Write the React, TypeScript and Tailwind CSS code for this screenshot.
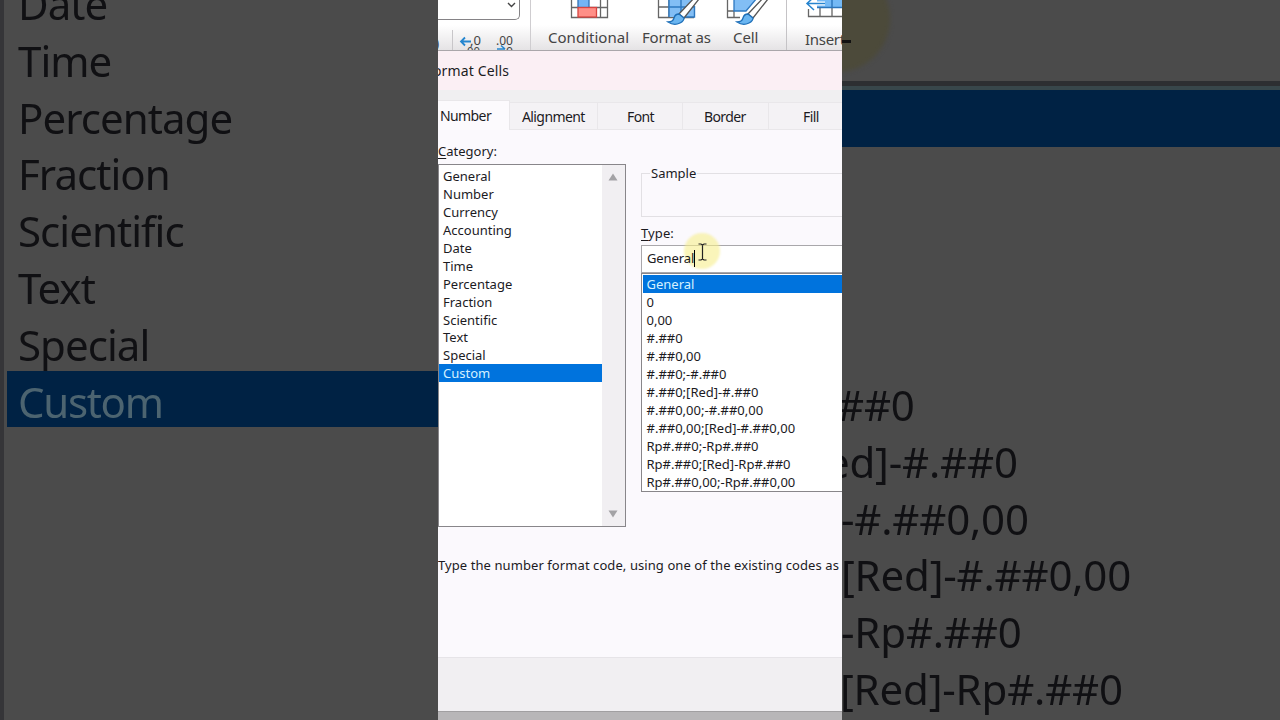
import React from "react";

const categories = [
  "General", "Number", "Currency", "Accounting", "Date", "Time",
  "Percentage", "Fraction", "Scientific", "Text", "Special", "Custom",
];

const formats = [
  "General", "0", "0,00", "#.##0", "#.##0,00", "#.##0;-#.##0",
  "#.##0;[Red]-#.##0", "#.##0,00;-#.##0,00", "#.##0,00;[Red]-#.##0,00",
  "Rp#.##0;-Rp#.##0", "Rp#.##0;[Red]-Rp#.##0", "Rp#.##0,00;-Rp#.##0,00",
];

const backdropFormats = [
  { text: "##0", shift: "-ml-[5px]" },
  { text: "ed]-#.##0", shift: "-ml-[16px]" },
  { text: "-#.##0,00", shift: "-ml-[1px]" },
  { text: "[Red]-#.##0,00", shift: "-ml-[1px]" },
  { text: "-Rp#.##0", shift: "-ml-[1px]" },
  { text: "[Red]-Rp#.##0", shift: "-ml-[2px]" },
];

// Enlarged, dimmed category list on the left side
const LeftBackdrop: React.FC = () => (
  <aside className="w-[438px] shrink-0 h-full overflow-hidden bg-[#4b4b4b] border-l-4 border-[#353538]">
    <ul className="-mt-[27px] ml-[3px] blur-[0.7px] text-[42px] tracking-[-0.95px] text-[#101013]">
      {categories.slice(4).map((name) => (
        <li
          key={name}
          className={`h-[56.8px] leading-[62px] pl-[11px] ${name === "Custom" ? "bg-[#002244] text-[#4c6470] tracking-[-1.3px]" : ""}`}
        >
          {name}
        </li>
      ))}
    </ul>
  </aside>
);

// Enlarged, dimmed end of the format list on the right side
const RightBackdrop: React.FC = () => (
  <aside className="relative w-[438px] shrink-0 h-full overflow-hidden bg-[#4b4b4b]">
    <div className="absolute -left-[58px] -top-[34px] size-[106px] rounded-full bg-[#4c4a3a] blur-[2px]" />
    <div className="absolute left-0 top-[40px] w-[9px] h-[3px] bg-[#111] blur-[0.6px]" />
    <div className="mt-[81px] h-[5px] bg-[#2d2f32] blur-[0.6px]" />
    <div className="h-[4px] bg-[#38474b]" />
    <div className="h-[57px] bg-[#002244]" />
    <ul className="mt-[230px] blur-[0.7px] text-[42px] tracking-[-0.2px] text-[#101013]">
      {backdropFormats.map((row) => (
        <li key={row.text} className={`h-[56.8px] leading-[56.8px] whitespace-nowrap ${row.shift}`}>
          {row.text}
        </li>
      ))}
    </ul>
  </aside>
);

const Brush: React.FC = () => (
  <>
    <path d="M39 -4 L22 14 L27 18 L42 -1" fill="#fff" stroke="#555" strokeWidth="1.3" />
    <path d="M22 14 Q18 14 17 18 Q16 22 11 22 Q17 26 23 23 Q27 21 27 18 Z" fill="#69b5f1" stroke="#1e6fb8" strokeWidth="1.3" />
  </>
);

const ConditionalIcon: React.FC = () => (
  <svg width="40" height="26" viewBox="0 0 40 26" className="block">
    <path d="M1.5 -2 V17.5 H37.5 V-2 M1.5 7.5 H37.5 M30.5 -2 V17.5" fill="none" stroke="#666" strokeWidth="1.3" />
    <rect x="8" y="-2" width="11" height="9.5" fill="#74b4f5" stroke="#3171b5" strokeWidth="1.3" />
    <rect x="8" y="7.5" width="18.5" height="9.5" fill="#ff8f87" stroke="#d84440" strokeWidth="1.3" />
  </svg>
);

const FormatTableIcon: React.FC = () => (
  <svg width="44" height="26" viewBox="0 0 44 26" className="block">
    <path d="M1.5 -2 V17.5 H37 M1.5 7 H12 M12 -2 V17.5" fill="none" stroke="#666" strokeWidth="1.3" />
    <rect x="12" y="-2" width="25.5" height="19" fill="#82bef5" />
    <path d="M12 -2 V17 M12 7 H37.5 M24 -2 V17 M37.5 6 V17 H26" fill="none" stroke="#2d78c0" strokeWidth="1.4" />
    <Brush />
  </svg>
);

const CellStyleIcon: React.FC = () => (
  <svg width="44" height="26" viewBox="0 0 44 26" className="block">
    <path d="M1.5 -2 V17.5 H14 M1.5 11 H8 M8 11 V17.5" fill="none" stroke="#666" strokeWidth="1.3" />
    <path d="M8 -2 V11 H20 L31 -2 Z" fill="#82bef5" stroke="#2d78c0" strokeWidth="1.3" />
    <Brush />
  </svg>
);

const InsertIcon: React.FC = () => (
  <svg width="38" height="26" viewBox="0 0 38 26" className="block">
    <path d="M3.5 9 V16.5 H38 M15 8 V16.5 M27 8 V16.5" fill="none" stroke="#666" strokeWidth="1.3" />
    <path d="M12 -2 H38 V7.5 H12 Z" fill="#74b9f5" />
    <path d="M12 7.5 H38 M27 -2 V7.5" stroke="#2b75bb" strokeWidth="1.4" />
    <path d="M20 3.5 H3 M9 -3 L2 3.5 L9 10" fill="none" stroke="#fff" strokeWidth="4" />
    <path d="M20 3.5 H2 M9 -3 L2 3.5 L9 10" fill="none" stroke="#2684cf" strokeWidth="1.5" />
  </svg>
);

const DecimalIcons: React.FC = () => (
  <svg width="62" height="20" viewBox="0 0 62 20" className="block" fontSize="13">
    <path d="M12 11.5 H2 M6 7.5 L2 11.5 L6 15.5" fill="none" stroke="#2586cf" strokeWidth="1.8" />
    <text x="11" y="15" fill="#444" textLength="11" lengthAdjust="spacingAndGlyphs">,0</text>
    <text x="8" y="26" fill="#444" textLength="13" lengthAdjust="spacingAndGlyphs">00</text>
    <text x="37" y="14.5" fill="#444" textLength="17" lengthAdjust="spacingAndGlyphs">.00</text>
    <path d="M38 19 H46 M42 15.5 L46 19" fill="none" stroke="#2586cf" strokeWidth="1.6" />
    <text x="47" y="26" fill="#444" textLength="7" lengthAdjust="spacingAndGlyphs">0</text>
  </svg>
);

const Ribbon: React.FC = () => (
  <div className="flex h-[51px] overflow-hidden bg-gradient-to-b from-white from-50% to-[#e5e3e5] border-b border-[#aaa6aa] text-[15px] leading-5 text-[#444]">
    <div className="w-[93px] shrink-0 border-r border-[#cfcdd0]">
      <div className="w-[82px] h-[20px] border-r border-b border-[#858386] rounded-br-[5px] bg-white flex justify-end pr-[3px]">
        <svg width="9" height="10" viewBox="0 0 9 10">
          <path d="M1 3 L4.5 6.5 L8 3" fill="none" stroke="#444" strokeWidth="1.4" />
        </svg>
      </div>
      <div className="mt-[10px] flex">
        <span className="w-[15px] h-5 border-r border-[#c8c6c9] text-[14px] leading-[26px] -indent-[3px]">)</span>
        <div className="ml-[6px]"><DecimalIcons /></div>
      </div>
    </div>
    <div className="w-[256px] shrink-0 flex border-r border-[#c5c3c6]">
      <div className="w-[104px] ml-[17px]">
        <div className="ml-[22px]"><ConditionalIcon /></div>
        <div className="mt-px tracking-[0.02px]">Conditional</div>
      </div>
      <div className="w-[88px] -ml-[10px]">
        <div className="ml-[15px]"><FormatTableIcon /></div>
        <div className="mt-px tracking-[-0.2px]">Format as</div>
      </div>
      <div className="w-[50px]">
        <div className="-ml-[4px]"><CellStyleIcon /></div>
        <div className="mt-px ml-[3px] tracking-[-0.1px]">Cell</div>
      </div>
    </div>
    <div className="flex-1 overflow-hidden pl-[18px]">
      <InsertIcon />
      <div className="mt-[3px] tracking-[-0.3px]">Insert</div>
    </div>
  </div>
);

const Tabs: React.FC = () => (
  <div className="flex h-[30px] items-end bg-[#f0eff1] text-[14px] leading-[28px] tracking-[-0.6px]">
    <div className="w-[72px] h-[30px] bg-[#fcfafd] border-t border-r border-[#e9e7ea] pl-[2px] leading-[30px]">Number</div>
    <div className="w-[88px] h-[28px] bg-[#f4f2f5] border-y border-r border-[#e9e7ea] pl-[12px]">Alignment</div>
    <div className="w-[85px] h-[28px] bg-[#f4f2f5] border-y border-r border-[#e9e7ea] pl-[29px]">Font</div>
    <div className="w-[86px] h-[28px] bg-[#f4f2f5] border-y border-r border-[#e9e7ea] pl-[21px]">Border</div>
    <div className="flex-1 h-[28px] bg-[#f4f2f5] border-y border-[#e9e7ea] pl-[34px]">Fill</div>
  </div>
);

const CategoryList: React.FC = () => (
  <div className="w-[188px] shrink-0">
    <div className="h-[22px] leading-[22px]"><span className="underline underline-offset-2">C</span>ategory:</div>
    <div className="mt-[2px] h-[363px] flex bg-white border border-[#88868a]">
      <ul className="flex-1 pt-[2px]">
        {categories.map((name) => (
          <li
            key={name}
            className={`h-[17.95px] leading-[18px] pl-1 ${name === "Custom" ? "bg-[#0073dd] text-[#d5f0ff]" : ""}`}
          >
            {name}
          </li>
        ))}
      </ul>
      <div className="w-[23px] bg-[#f1eff2] flex flex-col items-center justify-between pt-[8px] pb-[8px] pr-[1px]">
        <svg width="10" height="8" viewBox="0 0 10 8"><path d="M5 0.5 L9.5 7.5 H0.5 Z" fill="#a3a2a5" /></svg>
        <svg width="10" height="8" viewBox="0 0 10 8"><path d="M5 7.5 L9.5 0.5 H0.5 Z" fill="#a3a2a5" /></svg>
      </div>
    </div>
  </div>
);

const TypePanel: React.FC = () => (
  <div className="flex-1 min-w-0 ml-[15px] pt-[24px]">
    <fieldset className="h-[53px] border border-r-0 border-[#e2e0e4] pl-[8px]">
      <legend className="h-[18px] leading-[18px] px-[1px]">Sample</legend>
    </fieldset>
    <div className="mt-[6px] h-5 leading-5 tracking-[0.1px]"><span className="underline underline-offset-2">T</span>ype:</div>
    <div className="relative mt-[2px] h-[28px] border border-r-0 border-[#a9a7ab] bg-white pl-[5px] leading-[25px]">
      <div className="absolute left-[42px] -top-[13px] size-[36px] rounded-full bg-[#f6ee8c]/60 blur-[1px]" />
      <span className="relative tracking-[-0.1px]">General</span>
      <div className="absolute left-[52px] top-[4px] w-px h-[17px] bg-black" />
      <svg className="absolute left-[56px] -top-[3px]" width="9" height="18" viewBox="0 0 9 18">
        <path d="M0.5 1 H3 L4.5 2 L6 1 H8.5 M4.5 2 V16 M0.5 17 H3 L4.5 16 L6 17 H8.5" fill="none" stroke="#222" strokeWidth="1.2" />
      </svg>
    </div>
    <ul className="h-[219px] border border-r-0 border-[#88868a] bg-white pt-px pl-[1px]">
      {formats.map((code, i) => (
        <li
          key={code}
          className={`h-[17.98px] leading-[18px] pl-[3.5px] whitespace-nowrap ${i === 0 ? "bg-[#0073dd] text-[#d5f0ff]" : ""}`}
        >
          {code}
        </li>
      ))}
    </ul>
  </div>
);

const FormatCellsDialog: React.FC = () => (
  <div className="flex-1 flex flex-col text-[#1c1b1f]">
    <div className="h-[39px] bg-[#fbeff4] text-[14px] leading-[39px] -indent-[5px] tracking-[0.15px] overflow-hidden whitespace-nowrap">ormat Cells</div>
    <div className="h-[10px] bg-[#f0eff1]" />
    <Tabs />
    <div className="h-[527px] bg-[#fbf9fd] pt-[10px] text-[13px]">
      <div className="flex">
        <CategoryList />
        <TypePanel />
      </div>
      <p className="mt-[27px] leading-[22px] tracking-[0.08px] whitespace-nowrap">
        Type the number format code, using one of the existing codes as
      </p>
    </div>
    <div className="h-[54px] bg-[#f1eff2] border-t border-[#e6e4e8]" />
    <div className="flex-1 border-t border-[#a19fa1] bg-[#b8b6b8]" />
  </div>
);

export default function App() {
  return (
    <main className="w-[1280px] h-[720px] flex overflow-hidden bg-[#4b4b4b] font-['Noto_Sans','Open_Sans',sans-serif]">
      <LeftBackdrop />
      <section className="w-[404px] h-full shrink-0 flex flex-col overflow-hidden bg-white">
        <Ribbon />
        <FormatCellsDialog />
      </section>
      <RightBackdrop />
    </main>
  );
}
